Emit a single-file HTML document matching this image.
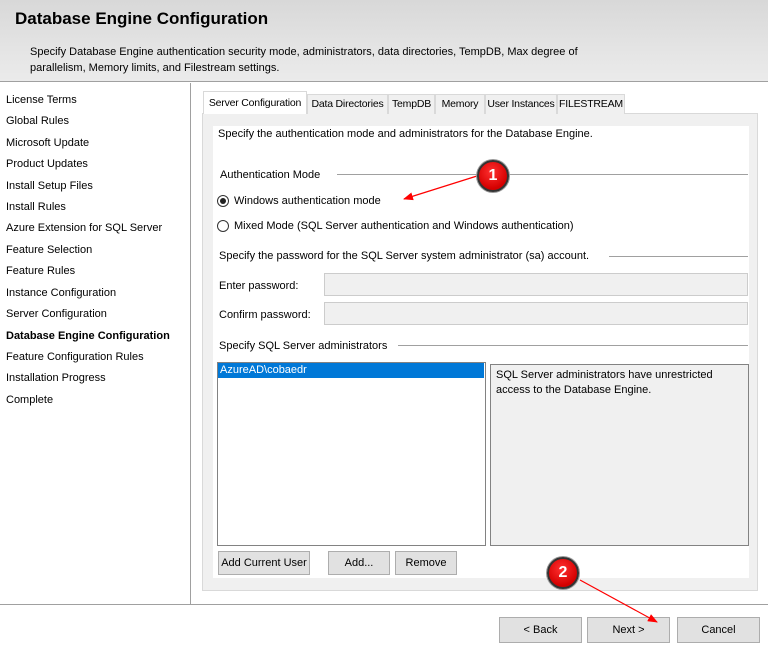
<!DOCTYPE html>
<html><head><meta charset="utf-8"><style>
*{margin:0;padding:0;box-sizing:border-box}
body{width:768px;height:649px;overflow:hidden;background:#fff;font-family:"Liberation Sans",sans-serif;font-size:11px;color:#000;position:relative}
.a{position:absolute;white-space:nowrap}
#hdr{left:0;top:0;width:768px;height:82px;background:linear-gradient(#d8d8d8,#e4e4e4 60%,#ebebeb);border-bottom:1px solid #a0a0a0}
.nav{left:6px;font-size:11px}
.tab{top:94px;height:20px;border:1px solid #d9d9d9;border-bottom:none;background:#f0f0f0;text-align:center;line-height:19px;font-size:10.5px;letter-spacing:-0.2px;overflow:hidden}
.btn{background:#e1e1e1;border:1px solid #adadad;text-align:center;font-size:11px}
.line{height:1px;background:#a0a0a0}
.inp{left:324px;width:424px;height:23px;background:#f0f0f0;border:1px solid #ccc}
.badge{width:32px;height:32px;border-radius:50%;background:radial-gradient(circle at 45% 35%,#ff3030,#d40000 70%);border:2px solid #333;color:#fff;font-weight:bold;font-size:16px;text-align:center;line-height:28px;box-shadow:0 0 0 1px #999}
</style></head><body>
<div id="hdr" class="a"></div>
<div class="a" style="left:15px;top:9px;font-size:17px;font-weight:bold">Database Engine Configuration</div>
<div class="a" style="left:30px;top:44px;font-size:11px;line-height:16px">Specify Database Engine authentication security mode, administrators, data directories, TempDB, Max degree of<br>parallelism, Memory limits, and Filestream settings.</div>

<div class="a" style="left:190px;top:83px;width:1px;height:521px;background:#a0a0a0"></div>
<div class="a" style="left:0;top:604px;width:768px;height:1px;background:#a0a0a0"></div>

<div class="a nav" style="top:94px">License Terms</div>
<div class="a nav" style="top:115px">Global Rules</div>
<div class="a nav" style="top:137px">Microsoft Update</div>
<div class="a nav" style="top:158px">Product Updates</div>
<div class="a nav" style="top:180px">Install Setup Files</div>
<div class="a nav" style="top:201px">Install Rules</div>
<div class="a nav" style="top:222px">Azure Extension for SQL Server</div>
<div class="a nav" style="top:244px">Feature Selection</div>
<div class="a nav" style="top:265px">Feature Rules</div>
<div class="a nav" style="top:287px">Instance Configuration</div>
<div class="a nav" style="top:308px">Server Configuration</div>
<div class="a nav" style="top:330px;font-weight:bold">Database Engine Configuration</div>
<div class="a nav" style="top:351px">Feature Configuration Rules</div>
<div class="a nav" style="top:372px">Installation Progress</div>
<div class="a nav" style="top:394px">Complete</div>

<div class="a" style="left:202px;top:113px;width:556px;height:478px;background:#f0f0f0;border:1px solid #d9d9d9"></div>
<div class="a" style="left:213px;top:126px;width:536px;height:452px;background:#fff"></div>
<div class="a tab" style="left:203px;top:91px;width:104px;height:23px;background:#fff;line-height:22px">Server Configuration</div>
<div class="a tab" style="left:307px;width:81px">Data Directories</div>
<div class="a tab" style="left:388px;width:47px">TempDB</div>
<div class="a tab" style="left:435px;width:50px">Memory</div>
<div class="a tab" style="left:485px;width:72px">User Instances</div>
<div class="a tab" style="left:557px;width:68px">FILESTREAM</div>

<div class="a" style="left:218px;top:128px">Specify the authentication mode and administrators for the Database Engine.</div>
<div class="a" style="left:220px;top:169px">Authentication Mode</div>
<div class="a line" style="left:337px;top:174px;width:411px"></div>
<div class="a" style="left:217px;top:195px;width:12px;height:12px;border:1px solid #333;border-radius:50%;background:#fff"><div style="margin:2px;width:6px;height:6px;border-radius:50%;background:#222"></div></div>
<div class="a" style="left:234px;top:195px">Windows authentication mode</div>
<div class="a" style="left:217px;top:220px;width:12px;height:12px;border:1px solid #333;border-radius:50%;background:#fff"></div>
<div class="a" style="left:234px;top:220px">Mixed Mode (SQL Server authentication and Windows authentication)</div>
<div class="a" style="left:219px;top:250px">Specify the password for the SQL Server system administrator (sa) account.</div>
<div class="a line" style="left:609px;top:256px;width:139px"></div>
<div class="a" style="left:219px;top:280px">Enter password:</div>
<div class="a inp" style="top:273px"></div>
<div class="a" style="left:219px;top:309px">Confirm password:</div>
<div class="a inp" style="top:302px"></div>
<div class="a" style="left:219px;top:340px">Specify SQL Server administrators</div>
<div class="a line" style="left:398px;top:345px;width:350px"></div>

<div class="a" style="left:217px;top:362px;width:269px;height:184px;border:1px solid #828282;background:#fff"></div>
<div class="a" style="left:218px;top:363px;width:266px;height:15px;background:#0078d7;color:#fff;padding-left:2px;line-height:15px">AzureAD\cobaedr</div>
<div class="a" style="left:490px;top:364px;width:259px;height:182px;border:1px solid #828282;background:#f0f0f0;padding:3px 5px;line-height:15px;white-space:normal">SQL Server administrators have unrestricted access to the Database Engine.</div>

<div class="a btn" style="left:218px;top:551px;width:92px;height:24px;line-height:22px">Add Current User</div>
<div class="a btn" style="left:328px;top:551px;width:62px;height:24px;line-height:22px">Add...</div>
<div class="a btn" style="left:395px;top:551px;width:62px;height:24px;line-height:22px">Remove</div>

<div class="a btn" style="left:499px;top:617px;width:83px;height:26px;line-height:24px">&lt; Back</div>
<div class="a btn" style="left:587px;top:617px;width:83px;height:26px;line-height:24px">Next &gt;</div>
<div class="a btn" style="left:677px;top:617px;width:83px;height:26px;line-height:24px">Cancel</div>

<svg class="a" style="left:0;top:0" width="768" height="649">
<defs><marker id="m" markerWidth="10" markerHeight="8" refX="9" refY="4" orient="auto" markerUnits="userSpaceOnUse"><path d="M0,0 L10,4 L0,8 z" fill="#f00"/></marker></defs>
<line x1="477" y1="176" x2="404" y2="199" stroke="#f00" stroke-width="1.2" marker-end="url(#m)"/>
<line x1="580" y1="580" x2="657" y2="622" stroke="#f00" stroke-width="1.2" marker-end="url(#m)"/>
</svg>
<div class="a badge" style="left:477px;top:160px">1</div>
<div class="a badge" style="left:547px;top:557px">2</div>
</body></html>
